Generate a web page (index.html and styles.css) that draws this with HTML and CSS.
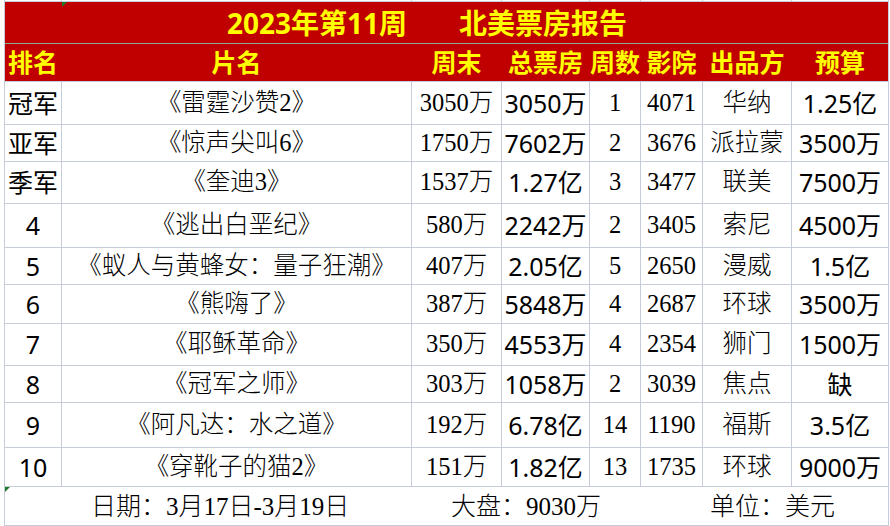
FILE: index.html
```html
<!DOCTYPE html>
<html lang="zh-CN">
<head>
<meta charset="utf-8">
<title>2023年第11周 北美票房报告</title>
<link rel="stylesheet" href="styles.css">
</head>
<body>
<div class="sheet">
  <div class="row strip"><div></div><div></div><div></div><div></div><div></div><div></div><div></div><div></div></div>
  <div class="title"><span class="t1">2023年第11周</span><span class="t2">北美票房报告</span></div>
  <div class="row head">
    <div>排名</div><div>片名</div><div>周末</div><div>总票房</div><div>周数</div><div>影院</div><div>出品方</div><div>预算</div>
  </div>
  <div class="row r1"><div class="sans">冠军</div><div class="ser">《雷霆沙赞2》</div><div class="ser">3050万</div><div class="sans">3050万</div><div class="ser">1</div><div class="ser">4071</div><div class="ser">华纳</div><div class="sans">1.25亿</div></div>
  <div class="row r2"><div class="sans">亚军</div><div class="ser">《惊声尖叫6》</div><div class="ser">1750万</div><div class="sans">7602万</div><div class="ser">2</div><div class="ser">3676</div><div class="ser">派拉蒙</div><div class="sans">3500万</div></div>
  <div class="row r3"><div class="sans">季军</div><div class="ser">《奎迪3》</div><div class="ser">1537万</div><div class="sans">1.27亿</div><div class="ser">3</div><div class="ser">3477</div><div class="ser">联美</div><div class="sans">7500万</div></div>
  <div class="row r4"><div class="sans">4</div><div class="ser">《逃出白垩纪》</div><div class="ser">580万</div><div class="sans">2242万</div><div class="ser">2</div><div class="ser">3405</div><div class="ser">索尼</div><div class="sans">4500万</div></div>
  <div class="row r5"><div class="sans">5</div><div class="ser">《蚁人与黄蜂女：量子狂潮》</div><div class="ser">407万</div><div class="sans">2.05亿</div><div class="ser">5</div><div class="ser">2650</div><div class="ser">漫威</div><div class="sans">1.5亿</div></div>
  <div class="row r6"><div class="sans">6</div><div class="ser">《熊嗨了》</div><div class="ser">387万</div><div class="sans">5848万</div><div class="ser">4</div><div class="ser">2687</div><div class="ser">环球</div><div class="sans">3500万</div></div>
  <div class="row r7"><div class="sans">7</div><div class="ser">《耶稣革命》</div><div class="ser">350万</div><div class="sans">4553万</div><div class="ser">4</div><div class="ser">2354</div><div class="ser">狮门</div><div class="sans">1500万</div></div>
  <div class="row r8"><div class="sans">8</div><div class="ser">《冠军之师》</div><div class="ser">303万</div><div class="sans">1058万</div><div class="ser">2</div><div class="ser">3039</div><div class="ser">焦点</div><div class="sans">缺</div></div>
  <div class="row r9"><div class="sans">9</div><div class="ser">《阿凡达：水之道》</div><div class="ser">192万</div><div class="sans">6.78亿</div><div class="ser">14</div><div class="ser">1190</div><div class="ser">福斯</div><div class="sans">3.5亿</div></div>
  <div class="row r10"><div class="sans">10</div><div class="ser">《穿靴子的猫2》</div><div class="ser">151万</div><div class="sans">1.82亿</div><div class="ser">13</div><div class="ser">1735</div><div class="ser">环球</div><div class="sans">9000万</div></div>
  <div class="foot"><span class="f1">日期：3月17日-3月19日</span><span class="f2">大盘：9030万</span><span class="f3">单位：美元</span></div>
  <span class="tri tri-top"></span>
  <span class="tri tri-foot"></span>
</div>
</body>
</html>
```

FILE: styles.css
```css
html, body {
  margin: 0;
  padding: 0;
  background: #ffffff;
}

.sheet {
  position: relative;
  margin-left: 4px;
  width: 883px;
  border-left: 1px solid #c6ccda;
  border-right: 1px solid #c6ccda;
  color: #000;
}

.row {
  display: grid;
  grid-template-columns: 56px 349px 89px 87px 50px 61px 88px 96px;
  column-gap: 1px;
  background: #c6ccda;
  border-bottom: 1px solid #c6ccda;
}

.row > div {
  background: #ffffff;
  display: flex;
  align-items: center;
  justify-content: center;
  white-space: nowrap;
  line-height: 1;
}

.strip { height: 1px; }

.title {
  height: 41px;
  background: #c00000;
  border-bottom: 1px solid #86ad8c;
  display: flex;
  align-items: center;
  color: #ffff00;
  font-family: "Noto Sans", "Noto Sans CJK SC", sans-serif;
  font-weight: 700;
  font-size: 28px;
  line-height: 1;
  white-space: nowrap;
}

.t1 { margin-left: 222px; width: 232px; }

.head { height: 37px; background: #c00000; }
.head > div {
  background: #c00000;
  color: #ffff00;
  font-family: "Noto Sans", "Noto Sans CJK SC", sans-serif;
  font-weight: 700;
  font-size: 25px;
}

.sans {
  font-family: "Noto Sans", "Noto Sans CJK SC", sans-serif;
  font-size: 25px;
}

.ser {
  font-family: "Liberation Serif", "Noto Sans CJK SC", serif;
  font-size: 24.5px;
  font-weight: 300;
}

.r1 { height: 42px; }
.r2 { height: 36px; }
.r3 { height: 41px; }
.r4 { height: 43px; }
.r5 { height: 36px; }
.r6 { height: 38px; }
.r7 { height: 41px; }
.r8 { height: 36px; }
.r9 { height: 44px; }
.r10 { height: 38px; }

.foot {
  height: 38px;
  display: flex;
  align-items: center;
  border-bottom: 1px solid #c6ccda;
  font-family: "Liberation Serif", "Noto Sans CJK SC", serif;
  font-size: 25px;
  font-weight: 300;
  line-height: 1;
  white-space: nowrap;
}

.f1 { margin-left: 86px; width: 360px; }
.f2 { width: 259px; }

.tri {
  position: absolute;
  width: 0;
  height: 0;
  border-top: 5px solid #1d7b2a;
  border-right: 5px solid transparent;
}
.tri-top { left: 57px; top: 2px; }
.tri-foot { left: 0; top: 487px; }
```
